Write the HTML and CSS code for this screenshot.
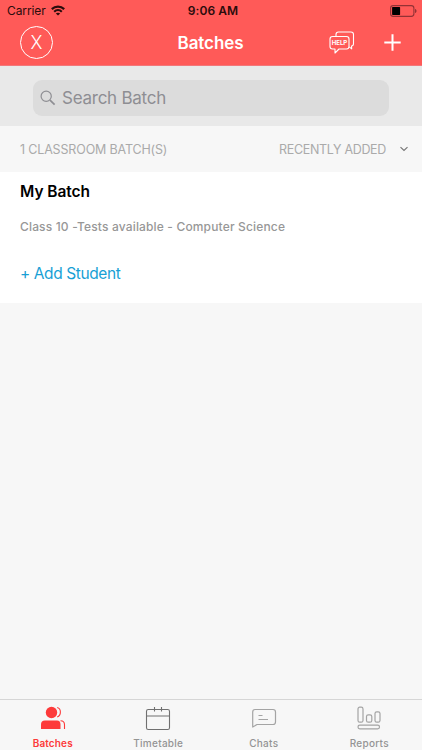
FILE: index.html
```
<!DOCTYPE html>
<html lang="en">
<head>
<meta charset="utf-8">
<title>Batches</title>
<link rel="stylesheet" href="styles.css">
</head>
<body>
<div class="app">
  <header class="top">
    <div class="status">
      <span class="carrier">Carrier
        <svg class="wifi" width="14" height="11" viewBox="0 0 14 11" fill="none" stroke="#2b0c0c" stroke-width="2.200"><path d="M.8 4.100C4.300.8 9.700.8 13.200 4.100M3.200 6.700c2.200-2 5.400-2 7.600 0"/><path d="M7 10.600 4.800 8.600c1.200-1.100 3.200-1.100 4.400 0z" fill="#2b0c0c" stroke="none"/></svg>
      </span>
      <span class="clock">9:06 AM</span>
      <svg class="battery" width="27" height="12" viewBox="0 0 27 12"><rect x=".6" y=".6" width="23.300" height="10.800" rx="2.600" fill="none" stroke="#933235" stroke-width="1.100"/><rect x="2.100" y="2.100" width="8" height="7.800" rx=".6" fill="#000"/><path d="M25 4c2 .6 2 3.400 0 4z" fill="#933235"/></svg>
    </div>
    <nav class="navbar">
      <span class="close">X</span>
      <h1 class="title">Batches</h1>
      <span class="actions">
        <svg width="27" height="24" viewBox="0 0 27 24" fill="none" stroke="#fff" stroke-width="1.100" stroke-linejoin="round"><path d="M7 5V3.500Q7 1 9.500 1H22q2.500 0 2.500 2.500v9q0 2.500-2 2.500l.2 2.900-2.500-2"/><path d="M3.500 5.500h14q2.500 0 2.500 2.500v7.500q0 2.500-2.500 2.500H10l-4 4v-4H3.500Q1 18 1 15.500V8q0-2.500 2.500-2.500z"/><text class="help" x="2.700" y="14" textLength="15.600" lengthAdjust="spacingAndGlyphs">HELP</text></svg>
        <svg width="17" height="17" viewBox="0 0 17 17" stroke="#fff" stroke-width="2"><path d="M8.500.3v16.400M.3 8.500h16.400"/></svg>
      </span>
    </nav>
  </header>
  <div class="search">
    <div class="field">
      <svg width="16" height="16" viewBox="0 0 16 16" fill="none" stroke="#8e8e93" stroke-width="1.200"><circle cx="6.200" cy="6.300" r="5.100"/><path d="m10 10.200 4.600 4.400" stroke-width="1.700"/></svg>
      <span class="placeholder">Search Batch</span>
    </div>
  </div>
  <div class="filter">
    <span class="count">1 CLASSROOM BATCH(S)</span>
    <span class="sort">RECENTLY ADDED</span>
    <svg width="8" height="6" viewBox="0 0 8 6" fill="none" stroke="#777" stroke-width="1.200"><path d="m.5 1.100 3.500 3.300 3.500-3.300"/></svg>
  </div>
  <section class="batch">
    <h2 class="name">My Batch</h2>
    <p class="detail">Class 10 -Tests available - Computer Science</p>
    <a class="add">+ Add Student</a>
  </section>
  <main class="blank"></main>
  <nav class="tabs">
    <a class="tab active">
      <svg width="26" height="26" viewBox="0 0 26 26"><circle cx="11.500" cy="7.500" r="5.700" fill="#fd3a3a"/><path d="M1 24v-4.500q0-4 4-4h12q3.500 0 3.500 4V24z" fill="#fd3a3a"/><path d="M17.200 2.500c4.200 1 4.300 7.800 0 9.500M20.500 15.800q4 0 4 4V24" fill="none" stroke="#fd3a3a" stroke-width="1.100"/></svg>
      <span>Batches</span>
    </a>
    <a class="tab">
      <svg width="26" height="26" viewBox="0 0 26 26" fill="none" stroke="#707070" stroke-width="1.100"><rect x="1.500" y="4.500" width="23" height="20" rx="1.800"/><path d="M1.500 11h23M9.500 2v4.500M16.500 2v4.500"/></svg>
      <span>Timetable</span>
    </a>
    <a class="tab">
      <svg width="26" height="26" viewBox="0 0 26 26" fill="none" stroke="#a4a4a4" stroke-width="1.200" stroke-linejoin="round"><path d="M4 4.500h18q2.500 0 2.500 2.500v10q0 2.500-2.500 2.500H6L1.700 22V7q0-2.500 2.300-2.500z"/><path d="M7.500 10.500h4M7.500 14.500h9.500"/></svg>
      <span>Chats</span>
    </a>
    <a class="tab">
      <svg width="26" height="26" viewBox="0 0 26 26" fill="none" stroke="#a4a4a4" stroke-width="1.200"><rect x="2" y="2.200" width="5" height="15" rx="1.800"/><rect x="10.500" y="9.800" width="5.300" height="7.400" rx="1.800"/><rect x="19" y="6.800" width="5" height="10.400" rx="1.800"/><rect x="2" y="20.200" width="21.500" height="3.600" rx="1.800"/></svg>
      <span>Reports</span>
    </a>
  </nav>
</div>
</body>
</html>
```
FILE: styles.css
```
* { box-sizing: border-box; margin: 0; padding: 0; }
body { background: #f7f7f7; font-family: Inter, "Liberation Sans", sans-serif; }
svg { display: block; flex: none; }
.app { width: 422px; height: 750px; display: flex; flex-direction: column; overflow: hidden; white-space: nowrap; }

.top { height: 66px; background: #ff5a58; border-bottom: 1px solid #f2777a; }
.status { height: 21px; padding: 0 5px 0 7px; display: grid; grid-template-columns: 1fr auto 1fr; align-items: center; color: #2b0c0c; }
.carrier { display: flex; align-items: center; gap: 5px; font-size: 12px; letter-spacing: -.1px; }
.clock { padding-left: 2px; font-size: 12px; font-weight: 600; letter-spacing: .05px; }
.battery { justify-self: end; }
.navbar { height: 43px; padding: 0 21px 0 20px; display: grid; grid-template-columns: 1fr auto 1fr; align-items: center; }
.close { width: 33px; height: 33px; border: 1.2px solid #fff; border-radius: 50%; color: #fff; font-size: 18px; font-weight: 300; line-height: 31px; text-align: center; }
.title { color: #fff; font-size: 17px; font-weight: 600; letter-spacing: -.1px; }
.actions { justify-self: end; display: flex; align-items: center; gap: 28px; }
.help { font: 700 6px Inter, sans-serif; fill: #fff; stroke: none; }

.search { height: 60px; padding: 14px 33px 10px; background: #e9e9e9; }
.field { height: 36px; border-radius: 9px; background: #dcdcdc; display: flex; align-items: center; gap: 6px; padding-left: 7px; }
.placeholder { color: #8e8e93; font-size: 17px; letter-spacing: -.25px; }

.filter { height: 46px; padding: 0 14px 0 20px; display: flex; align-items: center; color: #aaa; font-size: 12.5px; }
.count { letter-spacing: -.16px; }
.sort { margin-left: auto; margin-right: 14px; letter-spacing: -.33px; }

.batch { height: 131px; padding: 10px 20px 0; background: #fff; display: flex; flex-direction: column; }
.name { font-size: 15.5px; line-height: 20px; font-weight: 600; color: #000; letter-spacing: -.05px; }
.detail { margin-top: 16px; font-size: 12px; line-height: 18px; font-weight: 500; color: #979797; letter-spacing: .16px; }
.add { margin-top: 28px; font-size: 15.5px; line-height: 20px; color: #189fd5; letter-spacing: -.4px; }
.blank { flex: 1; }

.tabs { height: 51px; border-top: 1px solid #d6d6d6; display: grid; grid-template-columns: repeat(4, 1fr); padding-top: 5px; }
.tab { display: flex; flex-direction: column; align-items: center; gap: 5px; font-size: 10px; line-height: 14px; font-weight: 500; color: #949494; letter-spacing: .28px; }
.active { color: #fd3a3a; font-weight: 600; letter-spacing: .15px; }
```
